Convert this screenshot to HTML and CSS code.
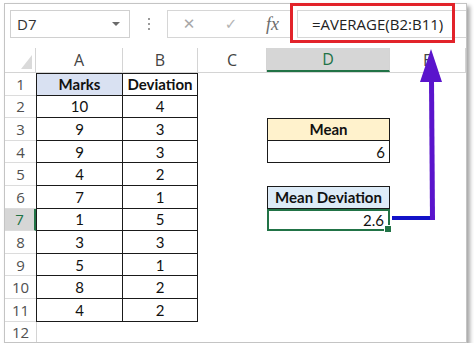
FILE: index.html
```html
<!DOCTYPE html>
<html lang="en">
<head>
    <meta charset="UTF-8">
    <meta name="viewport" content="width=device-width, initial-scale=1.0">
    <title>Mean Deviation</title>
    <link rel="stylesheet" href="styles.css">
</head>
<body>
    <div class="window">
        <div class="toolbar">
            <div class="namebox">
                <span>D7</span>
                <span class="caret"></span>
            </div>
            <div class="dots"><i></i><i></i><i></i></div>
            <div class="fxbox">
                <span class="icon">&#x2715;</span>
                <span class="icon check">&#x2713;</span>
                <span class="fx">fx</span>
            </div>
            <div class="formula">=AVERAGE(B2:B11)</div>
        </div>

        <div class="sheet">
            <div class="row head">
                <div class="corner"></div>
                <div class="col">A</div>
                <div class="col">B</div>
                <div class="col">C</div>
                <div class="col sel">D</div>
                <div class="col">E</div>
            </div>
            <div class="row">
                <div class="num">1</div>
                <div class="c a t top blue bold">Marks</div>
                <div class="c b t top bold">Deviation</div>
                <div class="c"></div><div class="c"></div><div class="c"></div>
            </div>
            <div class="row">
                <div class="num">2</div>
                <div class="c a t">10</div><div class="c b t">4</div>
                <div class="c"></div><div class="c"></div><div class="c"></div>
            </div>
            <div class="row">
                <div class="num">3</div>
                <div class="c a t">9</div><div class="c b t">3</div>
                <div class="c"></div>
                <div class="c d box cream bold">Mean</div>
                <div class="c"></div>
            </div>
            <div class="row">
                <div class="num">4</div>
                <div class="c a t">9</div><div class="c b t">3</div>
                <div class="c"></div>
                <div class="c d box under right">6</div>
                <div class="c"></div>
            </div>
            <div class="row">
                <div class="num">5</div>
                <div class="c a t">4</div><div class="c b t">2</div>
                <div class="c"></div><div class="c"></div><div class="c"></div>
            </div>
            <div class="row">
                <div class="num">6</div>
                <div class="c a t">7</div><div class="c b t">1</div>
                <div class="c"></div>
                <div class="c d box sky bold">Mean Deviation</div>
                <div class="c"></div>
            </div>
            <div class="row">
                <div class="num active">7</div>
                <div class="c a t">1</div><div class="c b t">5</div>
                <div class="c"></div>
                <div class="c d picked right">2.6</div>
                <div class="c"></div>
            </div>
            <div class="row">
                <div class="num">8</div>
                <div class="c a t">3</div><div class="c b t">3</div>
                <div class="c"></div><div class="c"></div><div class="c"></div>
            </div>
            <div class="row">
                <div class="num">9</div>
                <div class="c a t">5</div><div class="c b t">1</div>
                <div class="c"></div><div class="c"></div><div class="c"></div>
            </div>
            <div class="row">
                <div class="num">10</div>
                <div class="c a t">8</div><div class="c b t">2</div>
                <div class="c"></div><div class="c"></div><div class="c"></div>
            </div>
            <div class="row">
                <div class="num">11</div>
                <div class="c a t">4</div><div class="c b t">2</div>
                <div class="c"></div><div class="c"></div><div class="c"></div>
            </div>
            <div class="row">
                <div class="num">12</div>
                <div class="c a"></div><div class="c"></div>
                <div class="c"></div><div class="c"></div><div class="c"></div>
            </div>
        </div>
    </div>

    <!-- annotation drawn over the screenshot -->
    <div class="redbox"></div>
    <svg class="arrow" width="474" height="351" viewBox="0 0 474 351">
        <rect x="392" y="216" width="42" height="4" fill="#1212c8"/>
        <polygon points="429,80 434,80 435,220 430,220" fill="#5a14cc"/>
        <polygon points="431,49 442,82 420,82" fill="#5a14cc"/>
    </svg>
</body>
</html>
```

FILE: styles.css
```css
* {
    box-sizing: border-box;
}

body {
    margin: 0;
    padding: 3px 0 0 4px;
    background: #fff;
    font-family: "Open Sans", sans-serif;
}

.window {
    width: 463px;
    height: 340px;
    border: 1px solid #c4c4c4;
    background: #fff;
    box-shadow: 3px 3px 4px rgba(0, 0, 0, 0.35);
    overflow: hidden;
}

/* formula bar */
.toolbar {
    display: flex;
    align-items: flex-start;
    height: 44px;
    padding: 6px 0 0 5px;
}

.namebox {
    display: flex;
    align-items: center;
    justify-content: space-between;
    width: 120px;
    height: 28px;
    padding: 0 9px 0 6px;
    border: 1px solid #d0d0d0;
    font-size: 15px;
    color: #333;
}

.caret {
    width: 0;
    height: 0;
    border-left: 4px solid transparent;
    border-right: 4px solid transparent;
    border-top: 4px solid #6a6a6a;
}

.dots {
    display: flex;
    flex-direction: column;
    align-items: center;
    gap: 3px;
    width: 37px;
    padding-top: 8px;
}

.dots i {
    width: 2px;
    height: 2px;
    background: #9a9a9a;
}

.fxbox {
    display: flex;
    align-items: center;
    width: 123px;
    height: 28px;
    border: 1px solid #d6d6d6;
    border-right: none;
    color: #a8a8a8;
}

.icon {
    width: 42px;
    text-align: center;
    font-size: 15px;
    font-family: "DejaVu Sans", sans-serif;
}

.check {
    color: #b4b4b4;
}

.fx {
    margin-left: 14px;
    font-family: "Liberation Serif", serif;
    font-style: italic;
    font-size: 18px;
    color: #6c6c6c;
}

.formula {
    flex: 1;
    height: 28px;
    margin-left: 7px;
    padding-left: 14px;
    border: 1px solid #d6d6d6;
    border-right: none;
    font-size: 15px;
    line-height: 26px;
    color: #222;
}

/* grid */
.row {
    display: grid;
    grid-template-columns: 31px 87px 75px 69px 123px 1fr;
    height: 22.6px;
    font-family: "Lato", sans-serif;
    font-size: 15px;
    color: #111;
}

.row.head {
    height: 25px;
    border-bottom: 1px solid #d4d4d4;
    font-family: "Open Sans", sans-serif;
    color: #444;
}

.corner {
    position: relative;
    border-right: 1px solid #d4d4d4;
}

.corner::after {
    content: "";
    position: absolute;
    right: 3px;
    bottom: 3px;
    border-left: 11px solid transparent;
    border-bottom: 14px solid #dadada;
}

.col {
    display: flex;
    align-items: center;
    justify-content: center;
    border-right: 1px solid #d4d4d4;
    font-size: 16px;
}

.col.sel {
    background: #d6d6d6;
    border-bottom: 2px solid #217346;
    color: #217346;
}

.num {
    display: flex;
    align-items: center;
    justify-content: center;
    border-bottom: 1px solid #dcdcdc;
    font-family: "Open Sans", sans-serif;
    font-size: 15px;
    color: #505050;
}

.num.active {
    background: #d6d6d6;
    border-right: 2px solid #217346;
    color: #217346;
}

.c {
    display: flex;
    align-items: center;
    justify-content: center;
    padding: 0 4px;
}

.a {
    border-left: 1px solid #d4d4d4;
}

.t {
    border-right: 1px solid #1a1a1a;
    border-bottom: 1px solid #1a1a1a;
}

.t.a {
    border-left-color: #1a1a1a;
}

.top {
    border-top: 1px solid #1a1a1a;
}

.bold {
    font-weight: bold;
}

.right {
    justify-content: flex-end;
}

.blue {
    background: #d9e1f2;
}

.cream {
    background: #fff2cc;
}

.sky {
    background: #ddebf7;
}

.box {
    border: 1px solid #1a1a1a;
}

.box.under {
    border-top: none;
}

.picked {
    position: relative;
    border: 2px solid #217346;
}

.picked::after {
    content: "";
    position: absolute;
    right: -4px;
    bottom: -4px;
    width: 6px;
    height: 6px;
    background: #217346;
    border: 1px solid #fff;
}

/* annotation */
.redbox {
    position: absolute;
    left: 290px;
    top: 3px;
    width: 165px;
    height: 40px;
    border: 3px solid #e2232a;
}

.arrow {
    position: absolute;
    left: 0;
    top: 0;
}
```
